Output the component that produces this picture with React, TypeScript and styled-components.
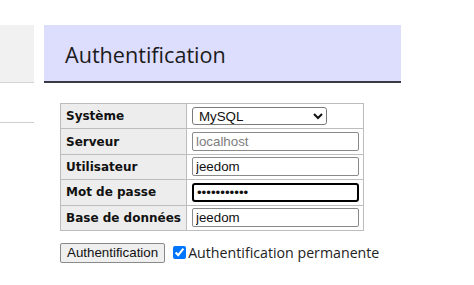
import styled, { createGlobalStyle } from "styled-components";

const GlobalStyle = createGlobalStyle`
  html, body {
    margin: 0;
    padding: 0;
    background: #ffffff;
  }
  body {
    font-family: "Liberation Sans", Arial, sans-serif;
    font-size: 13.33px;
    color: #000;
  }
`;

const Page = styled.div`
  display: flex;
  align-items: flex-start;
  gap: 10px;
  padding-top: 25px;
`;

const Sidebar = styled.aside`
  width: 34px;
  flex-shrink: 0;
`;

const SideBox = styled.div`
  height: 57px;
  background: #f1f1f1;
  border-bottom: 1px solid #d4d4d4;
`;

const SideRule = styled.div`
  margin-top: 39px;
  height: 1px;
  background: #cfcfcf;
`;

const Main = styled.main`
  width: 357px;
  flex-shrink: 0;
`;

const Header = styled.header`
  height: 56px;
  display: flex;
  align-items: center;
  padding: 0 0 0 21px;
  background: #ddddfd;
  border-bottom: 2px solid #3a3a44;
`;

const Title = styled.h1`
  margin: 0;
  padding-top: 2px;
  font-family: "Open Sans", "Segoe UI", sans-serif;
  font-weight: 400;
  font-size: 21.6px;
  color: #1b1b1b;
`;

const Form = styled.form`
  margin: 20px 0 0 16px;
`;

const Table = styled.table`
  border-collapse: collapse;
  width: 303px;
`;

const Row = styled.tr`
  height: 25.4px;
`;

const LabelCell = styled.th`
  text-align: left;
  padding: 0 5px;
  width: 115px;
  background: #ededed;
  border: 1px solid #bdbdbd;
  font-family: "DejaVu Sans", Verdana, sans-serif;
  font-weight: 700;
  font-size: 12px;
  color: #111;
  white-space: nowrap;
`;

const FieldCell = styled.td`
  padding: 0 4px 0 5px;
  border: 1px solid #bdbdbd;
  background: #fff;
`;

const Select = styled.select`
  display: block;
  width: 135px;
  height: 18px;
  padding: 0 2px;
  font-family: "Liberation Sans", Arial, sans-serif;
  font-size: 13.33px;
  color: #111;
  border: 1px solid #7a7a7a;
  border-radius: 3px;
  background: #fff;
`;

const TextInput = styled.input<{ $focused?: boolean }>`
  display: block;
  box-sizing: border-box;
  width: 167px;
  height: 19px;
  padding: 0 3px;
  font-family: "Liberation Sans", Arial, sans-serif;
  font-size: 13.33px;
  color: #111;
  background: #fff;
  border: ${({ $focused }) => ($focused ? "2px solid #000" : "1px solid #8a8a8a")};
  border-radius: ${({ $focused }) => ($focused ? "3px" : "2px")};
  outline: none;

  &::placeholder {
    color: #7d7d7d;
  }
`;

const Actions = styled.div`
  display: flex;
  align-items: center;
  margin-top: 12px;
`;

const Button = styled.button`
  height: 20px;
  padding: 0 6px;
  font-family: "Liberation Sans", Arial, sans-serif;
  font-size: 13.33px;
  color: #111;
  background: #efefef;
  border: 1px solid #8a8a8a;
  border-radius: 2px;
`;

const CheckLabel = styled.label`
  display: flex;
  align-items: center;
  margin-left: 8px;
  font-family: "Open Sans", "Segoe UI", sans-serif;
  font-size: 14.2px;
  color: #222;
`;

const Check = styled.input`
  width: 13px;
  height: 13px;
  margin: 0 2px 0 0;
`;

export default function App() {
  return (
    <>
      <GlobalStyle />
      <Page>
        <Sidebar>
          <SideBox />
          <SideRule />
        </Sidebar>
        <Main>
          <Header>
            <Title>Authentification</Title>
          </Header>
          <Form onSubmit={(e) => e.preventDefault()}>
            <Table>
              <tbody>
                <Row>
                  <LabelCell>Système</LabelCell>
                  <FieldCell>
                    <Select defaultValue="mysql">
                      <option value="mysql">MySQL</option>
                    </Select>
                  </FieldCell>
                </Row>
                <Row>
                  <LabelCell>Serveur</LabelCell>
                  <FieldCell>
                    <TextInput placeholder="localhost" />
                  </FieldCell>
                </Row>
                <Row>
                  <LabelCell>Utilisateur</LabelCell>
                  <FieldCell>
                    <TextInput defaultValue="jeedom" />
                  </FieldCell>
                </Row>
                <Row>
                  <LabelCell>Mot de passe</LabelCell>
                  <FieldCell>
                    <TextInput type="password" defaultValue="jeedomjeedo" $focused />
                  </FieldCell>
                </Row>
                <Row>
                  <LabelCell>Base de données</LabelCell>
                  <FieldCell>
                    <TextInput defaultValue="jeedom" />
                  </FieldCell>
                </Row>
              </tbody>
            </Table>
            <Actions>
              <Button type="submit">Authentification</Button>
              <CheckLabel>
                <Check type="checkbox" defaultChecked />
                Authentification permanente
              </CheckLabel>
            </Actions>
          </Form>
        </Main>
      </Page>
    </>
  );
}
